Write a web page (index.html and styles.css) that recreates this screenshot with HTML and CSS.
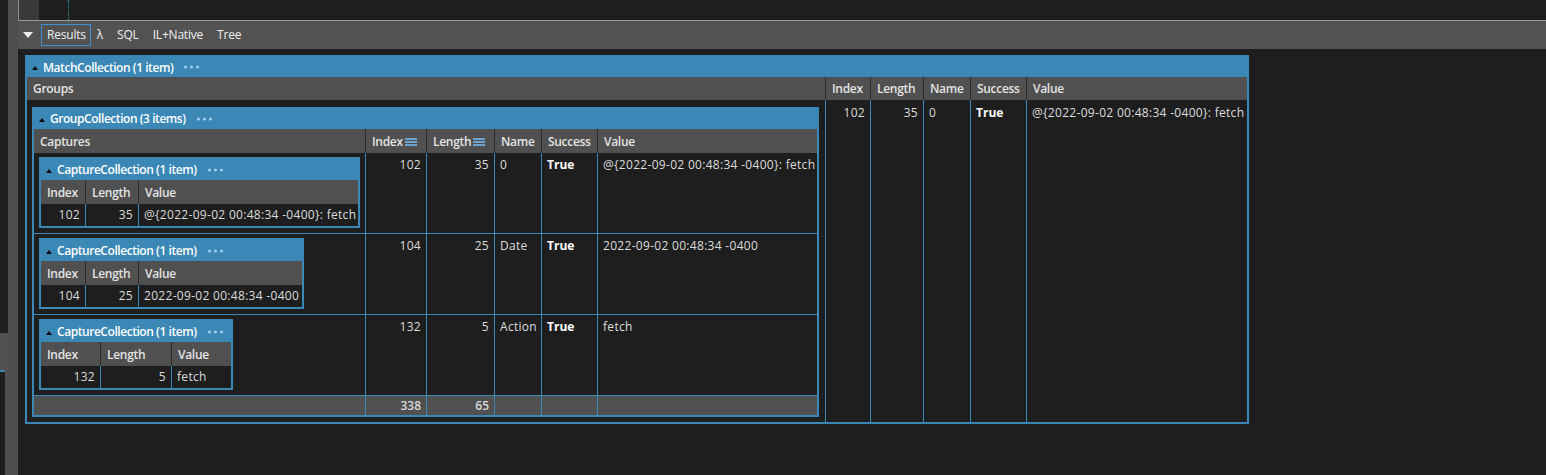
FILE: index.html
```html
<!DOCTYPE html>
<html>
<head>
<meta charset="utf-8">
<title>Results</title>
<link rel="stylesheet" href="styles.css">
</head>
<body>
<div class="app">
  <div class="side">
    <div class="side-a"></div>
    <div class="side-b"></div>
    <div class="side-c"><div class="side-c1"></div><div class="side-c2"></div></div>
  </div>
  <div class="strip"></div>
  <div class="main">
    <div class="editor"><div class="gutter"></div><div class="code"><div class="guide"></div></div></div>
    <div class="toolbar">
      <span class="collapse"></span>
      <span class="tab active">Results</span>
      <span class="tab">λ</span>
      <span class="tab">SQL</span>
      <span class="tab">IL+Native</span>
      <span class="tab">Tree</span>
    </div>
    <div class="results">
      <div class="coll">
        <div class="coll-head"><span class="tri"></span><span class="title">MatchCollection (1 item)</span><svg class="dots" width="15" height="4" viewBox="0 0 15 4"><circle cx="1.5" cy="2" r="1.5"/><circle cx="7.5" cy="2" r="1.5"/><circle cx="13.5" cy="2" r="1.5"/></svg></div>
        <table class="grid t-match">
          <thead>
            <tr><th class="m1">Groups</th><th class="m2">Index</th><th class="m3">Length</th><th class="m4">Name</th><th class="m5">Success</th><th class="m6">Value</th></tr>
          </thead>
          <tbody>
            <tr>
              <td class="nest nest-m">
                <div class="coll">
                  <div class="coll-head"><span class="tri"></span><span class="title">GroupCollection (3 items)</span><svg class="dots" width="15" height="4" viewBox="0 0 15 4"><circle cx="1.5" cy="2" r="1.5"/><circle cx="7.5" cy="2" r="1.5"/><circle cx="13.5" cy="2" r="1.5"/></svg></div>
                  <table class="grid t-group">
                    <thead>
                      <tr><th class="g1">Captures</th><th class="g2">Index<svg class="sort" width="12" height="8" viewBox="0 0 12 8"><rect x="0" y="0.2" width="12" height="1.6"/><rect x="0" y="3.2" width="12" height="1.6"/><rect x="0" y="6.2" width="12" height="1.6"/></svg></th><th class="g3">Length<svg class="sort" width="12" height="8" viewBox="0 0 12 8"><rect x="0" y="0.2" width="12" height="1.6"/><rect x="0" y="3.2" width="12" height="1.6"/><rect x="0" y="6.2" width="12" height="1.6"/></svg></th><th class="g4">Name</th><th class="g5">Success</th><th class="g6">Value</th></tr>
                    </thead>
                    <tbody>
                      <tr class="row">
                        <td class="nest nest-g">
                          <div class="coll cap">
                            <div class="coll-head"><span class="tri"></span><span class="title">CaptureCollection (1 item)</span><svg class="dots" width="15" height="4" viewBox="0 0 15 4"><circle cx="1.5" cy="2" r="1.5"/><circle cx="7.5" cy="2" r="1.5"/><circle cx="13.5" cy="2" r="1.5"/></svg></div>
                            <table class="grid t-cap1">
                              <thead><tr><th class="c1">Index</th><th class="c2">Length</th><th class="c3">Value</th></tr></thead>
                              <tbody><tr><td class="num">102</td><td class="num">35</td><td>@{2022-09-02 00:48:34 -0400}: fetch</td></tr></tbody>
                            </table>
                          </div>
                        </td>
                        <td class="num">102</td><td class="num">35</td><td>0</td><td class="b">True</td><td>@{2022-09-02 00:48:34 -0400}: fetch</td>
                      </tr>
                      <tr class="row">
                        <td class="nest nest-g">
                          <div class="coll cap">
                            <div class="coll-head"><span class="tri"></span><span class="title">CaptureCollection (1 item)</span><svg class="dots" width="15" height="4" viewBox="0 0 15 4"><circle cx="1.5" cy="2" r="1.5"/><circle cx="7.5" cy="2" r="1.5"/><circle cx="13.5" cy="2" r="1.5"/></svg></div>
                            <table class="grid t-cap2">
                              <thead><tr><th class="c1">Index</th><th class="c2">Length</th><th class="c3b">Value</th></tr></thead>
                              <tbody><tr><td class="num">104</td><td class="num">25</td><td>2022-09-02 00:48:34 -0400</td></tr></tbody>
                            </table>
                          </div>
                        </td>
                        <td class="num">104</td><td class="num">25</td><td>Date</td><td class="b">True</td><td>2022-09-02 00:48:34 -0400</td>
                      </tr>
                      <tr class="row">
                        <td class="nest nest-g">
                          <div class="coll cap">
                            <div class="coll-head"><span class="tri"></span><span class="title">CaptureCollection (1 item)</span><svg class="dots" width="15" height="4" viewBox="0 0 15 4"><circle cx="1.5" cy="2" r="1.5"/><circle cx="7.5" cy="2" r="1.5"/><circle cx="13.5" cy="2" r="1.5"/></svg></div>
                            <table class="grid t-cap3">
                              <thead><tr><th class="d1">Index</th><th class="d2">Length</th><th class="d3">Value</th></tr></thead>
                              <tbody><tr><td class="num">132</td><td class="num">5</td><td>fetch</td></tr></tbody>
                            </table>
                          </div>
                        </td>
                        <td class="num">132</td><td class="num">5</td><td>Action</td><td class="b">True</td><td>fetch</td>
                      </tr>
                      <tr class="total">
                        <td></td><td class="num">338</td><td class="num">65</td><td></td><td></td><td></td>
                      </tr>
                    </tbody>
                  </table>
                </div>
              </td>
              <td class="num top">102</td><td class="num top">35</td><td class="top">0</td><td class="b top">True</td><td class="top">@{2022-09-02 00:48:34 -0400}: fetch</td>
            </tr>
          </tbody>
        </table>
      </div>
    </div>
  </div>
</div>
</body>
</html>
```
FILE: styles.css
```css
* { box-sizing: border-box; }
html, body { margin: 0; padding: 0; }
body {
  width: 1546px;
  height: 475px;
  overflow: hidden;
  background: #1e1e1e;
  font-family: "Open Sans", "Noto Sans", sans-serif;
  font-size: 12px;
  color: #dcdcdc;
}
.app { display: flex; height: 475px; }

.side { width: 8px; display: flex; flex-direction: column; }
.side-a { height: 333px; background: #1e1e1e; }
.side-b { height: 37px; background: #505050; }
.side-c { flex: 1; display: flex; }
.side-c1 { width: 5px; background: #1e1e1e; border-top: 2px solid #3b87b5; }
.side-c2 { flex: 1; background: #505050; }
.strip { width: 10px; background: #4f4f4f; }

.main { flex: 1; display: flex; flex-direction: column; min-width: 0; }
.editor { height: 21px; display: flex; border-left: 1px solid #8f8f8f; border-bottom: 1px solid #9a9a9a; }
.gutter { width: 20px; background: #3a3a3a; }
.code { flex: 1; background: #1e1e1e; padding-left: 29px; }
.guide { width: 0; height: 20px; border-left: 1px dotted #2a9d9d; }

.toolbar { height: 28px; background: #525252; display: flex; align-items: center; padding-left: 5px; gap: 2px; }
.collapse { width: 0; height: 0; border-left: 5.5px solid transparent; border-right: 5.5px solid transparent; border-top: 6px solid #ececec; margin-right: 6px; }
.tab { height: 22px; line-height: 20px; padding: 0 5px; border: 1px solid transparent; color: #f0f0f0; letter-spacing: -0.2px; }
.tab.active { border-color: #3d8fd6; padding: 0 4px 0 5px; margin-right: -2px; }

.results { flex: 1; padding: 6px 0 0 7px; background: #1e1e1e; }

.coll { display: inline-block; vertical-align: top; border: 2px solid #3b87b5; background: #1e1e1e; }
.coll-head { height: 20px; background: #3b87b5; display: flex; align-items: center; color: #ffffff; font-weight: 600; white-space: nowrap; }
.cap .coll-head { height: 21px; }
.title { letter-spacing: -0.45px; }
.tri { width: 0; height: 0; border-left: 3px solid transparent; border-right: 3px solid transparent; border-bottom: 4px solid #0e0e0e; margin: 2px 5px 0 5px; }
.dots { margin-left: 11px; fill: #a2d2f7; }

.grid { border-collapse: separate; border-spacing: 0; table-layout: fixed; }
.grid th {
  height: 24px;
  padding: 1px 6px 0 6px;
  background: #505050;
  font-weight: 600;
  text-align: left;
  color: #e4e4e4;
  border-left: 1px solid #2b2b2b;
  white-space: nowrap;
  overflow: hidden;
  letter-spacing: -0.3px;
}
.grid td {
  height: 22px;
  padding: 1px 5px 0 5px;
  border-left: 1px solid #3b87b5;
  vertical-align: top;
  line-height: 20px;
  white-space: nowrap;
  overflow: hidden;
  letter-spacing: 0.3px;
}
.grid th:first-child, .grid td:first-child { border-left: 0; }
.num { text-align: right; }
.grid td.b { font-weight: 700; color: #ffffff; letter-spacing: 0; }
.sort { margin-left: 2px; vertical-align: 0; fill: #74b8f2; }

.t-match { width: 1220px; }
.t-match > thead > tr > th { height: 23px; padding-top: 0; }
.m1 { width: 798px; } .m2 { width: 45px; } .m3 { width: 53px; } .m4 { width: 47px; } .m5 { width: 56px; } .m6 { width: 221px; }
.grid td.top { padding-top: 3px; }
.grid td.nest-m { padding: 7px 6px 5px 5px; }

.t-group { width: 783px; }
.g1 { width: 331px; } .g2 { width: 61px; } .g3 { width: 68px; } .g4 { width: 47px; } .g5 { width: 56px; } .g6 { width: 220px; }
.t-group > tbody > .row > td { border-bottom: 1px solid #3b87b5; padding-top: 2px; }
.t-group > tbody > .row > td.nest-g { padding: 4px 5px 5px 5px; }
.t-group > tbody > .total > td { height: 19px; line-height: 19px; padding-top: 0; background: #505050; font-weight: 600; color: #d8d8d8; letter-spacing: 0; }

.t-cap1 { width: 317px; }
.t-cap2 { width: 261px; }
.t-cap3 { width: 190px; }
.c1 { width: 44px; } .c2 { width: 53px; } .c3 { width: 220px; } .c3b { width: 164px; }
.d1 { width: 59px; } .d2 { width: 71px; } .d3 { width: 60px; }
```
